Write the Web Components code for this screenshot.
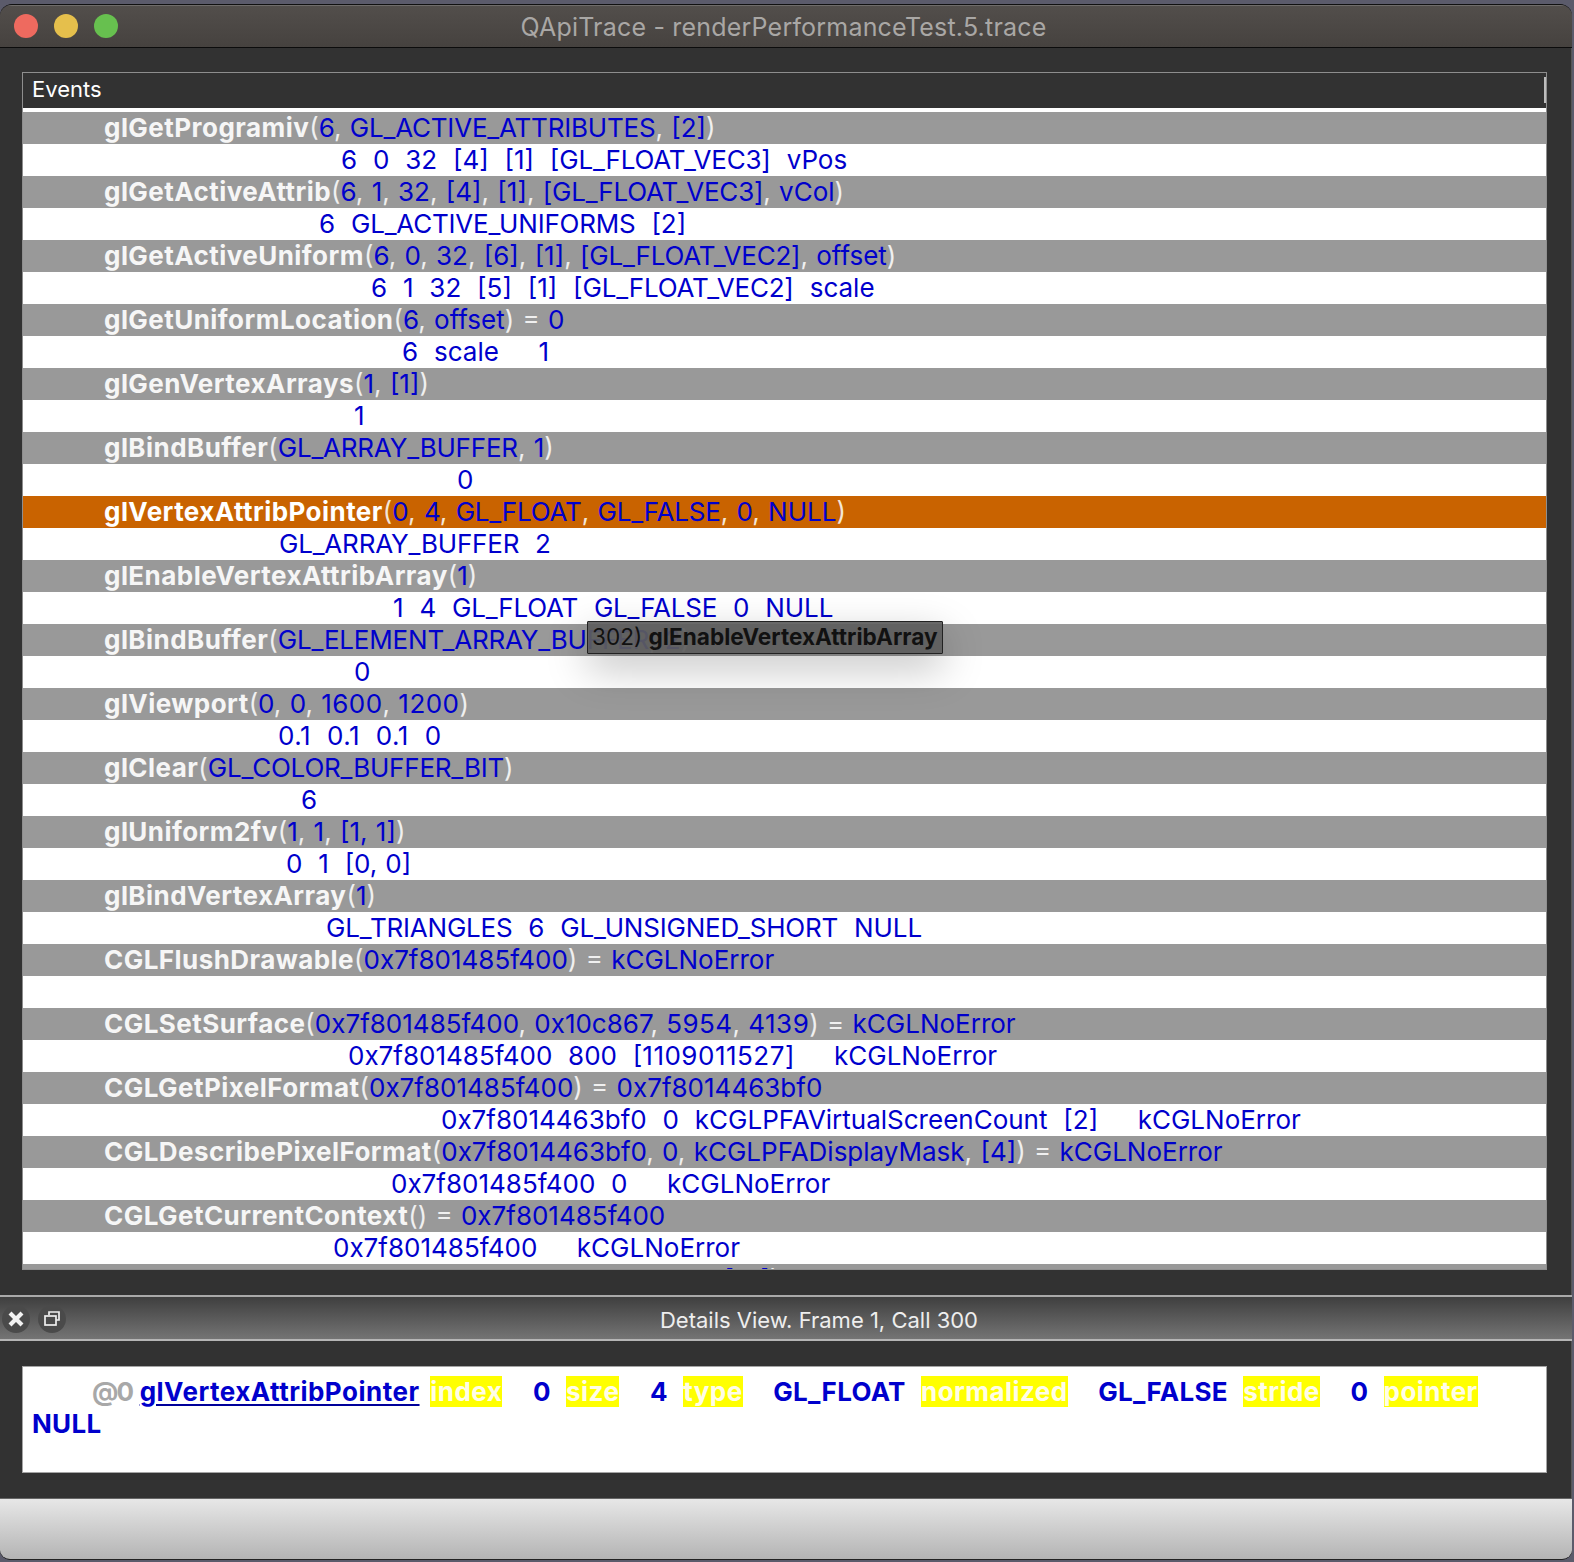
<!DOCTYPE html>
<html><head><meta charset="utf-8"><style>
html,body{margin:0;padding:0;background:#5b5b6b;width:1574px;height:1562px;overflow:hidden;font-family:Inter,"Liberation Sans",sans-serif}
</style></head><body>
<app-window>
  <title-bar slot="title">QApiTrace - renderPerformanceTest.5.trace</title-bar>
  <events-panel slot="events">
    <value-row pad="581">[2]</value-row>
    <call-row name="glGetProgramiv" args="6;GL_ACTIVE_ATTRIBUTES;[2]"></call-row>
    <value-row pad="341">6  0  32  [4]  [1]  [<gl-name>GL_FLOAT_VEC3</gl-name>]  vPos</value-row>
    <call-row name="glGetActiveAttrib" args="6;1;32;[4];[1];[GL_FLOAT_VEC3];vCol"></call-row>
    <value-row pad="319">6  <gl-name>GL_ACTIVE_UNIFORMS</gl-name>  [2]</value-row>
    <call-row name="glGetActiveUniform" args="6;0;32;[6];[1];[GL_FLOAT_VEC2];offset"></call-row>
    <value-row pad="371">6  1  32  [5]  [1]  [<gl-name>GL_FLOAT_VEC2</gl-name>]  scale</value-row>
    <call-row name="glGetUniformLocation" args="6;offset" ret="0"></call-row>
    <value-row pad="402">6  scale     1</value-row>
    <call-row name="glGenVertexArrays" args="1;[1]"></call-row>
    <value-row pad="354">1</value-row>
    <call-row name="glBindBuffer" args="GL_ARRAY_BUFFER;1"></call-row>
    <value-row pad="457">0</value-row>
    <call-row name="glVertexAttribPointer" args="0;4;GL_FLOAT;GL_FALSE;0;NULL" selected></call-row>
    <value-row pad="279"><gl-name>GL_ARRAY_BUFFER</gl-name>  2</value-row>
    <call-row name="glEnableVertexAttribArray" args="1"></call-row>
    <value-row pad="393">1  4  <gl-name>GL_FLOAT</gl-name>  <gl-name>GL_FALSE</gl-name>  0  NULL</value-row>
    <call-row name="glBindBuffer" args="GL_ELEMENT_ARRAY_BUFFER;2"></call-row>
    <value-row pad="354">0</value-row>
    <call-row name="glViewport" args="0;0;1600;1200"></call-row>
    <value-row pad="278"><wide-num>0.1</wide-num>  <wide-num>0.1</wide-num>  <wide-num>0.1</wide-num>  0</value-row>
    <call-row name="glClear" args="GL_COLOR_BUFFER_BIT"></call-row>
    <value-row pad="301">6</value-row>
    <call-row name="glUniform2fv" args="1;1;[1, 1]"></call-row>
    <value-row pad="286">0  1  [0, 0]</value-row>
    <call-row name="glBindVertexArray" args="1"></call-row>
    <value-row pad="326"><gl-name>GL_TRIANGLES</gl-name>  6  <gl-name>GL_UNSIGNED_SHORT</gl-name>  NULL</value-row>
    <call-row name="CGLFlushDrawable" args="0x7f801485f400" ret="kCGLNoError"></call-row>
    <value-row pad="0"></value-row>
    <call-row name="CGLSetSurface" args="0x7f801485f400;0x10c867;5954;4139" ret="kCGLNoError"></call-row>
    <value-row pad="348">0x7f801485f400  800  [<wide-num>1109011527</wide-num>]     kCGLNoError</value-row>
    <call-row name="CGLGetPixelFormat" args="0x7f801485f400" ret="0x7f8014463bf0"></call-row>
    <value-row pad="441">0x7f8014463bf0  0  kCGLPFAVirtualScreenCount  [2]     kCGLNoError</value-row>
    <call-row name="CGLDescribePixelFormat" args="0x7f8014463bf0;0;kCGLPFADisplayMask;[4]" ret="kCGLNoError"></call-row>
    <value-row pad="391">0x7f801485f400  0     kCGLNoError</value-row>
    <call-row name="CGLGetCurrentContext" args="" ret="0x7f801485f400"></call-row>
    <value-row pad="333">0x7f801485f400     kCGLNoError</value-row>
    <call-row name="glGetIntegerv" args="GL_MAX_TEXTURE_IMAGE_UNITS;[16]"></call-row>
    <trace-tip slot="tip"><span>302) </span><b>glEnableVertexAttribArray</b></trace-tip>
  </events-panel>
  <details-bar slot="bar">Details View. Frame 1, Call 300</details-bar>
  <details-view slot="details"></details-view>
  <status-strip slot="status"></status-strip>
</app-window>
<script>
const FONT='Inter,"Liberation Sans",sans-serif';
function def(name,html,init){customElements.define(name,class extends HTMLElement{constructor(){super();this.attachShadow({mode:'open'}).innerHTML=html;}connectedCallback(){init&&init.call(this,this.shadowRoot);}});}
def('app-window',`<style>
:host{display:block;position:relative;width:1574px;height:1562px;box-sizing:border-box;padding:4px 2px 2px 0;font-family:${FONT}}
.w{display:flex;flex-direction:column;height:100%;background:#323232;border-radius:12px 12px 10px 10px;overflow:hidden;border-top:1px solid #111;border-bottom:1px solid #222;box-sizing:border-box;box-shadow:inset -1px 0 0 #555}
.main{height:1247px;box-sizing:border-box;padding:24px 26px 0 22px}
</style><div class="w"><slot name="title"></slot><div class="main"><slot name="events"></slot></div><slot name="bar"></slot><slot name="details"></slot><slot name="status"></slot></div>`);
def('title-bar',`<style>
:host{display:flex;align-items:center;position:relative;height:43px;box-sizing:border-box;background:linear-gradient(#524e4b,#46423f);border-top:1px solid #6f6c6a;border-bottom:1px solid #0c0c0c;flex:none}
.l{position:absolute;left:14px;top:8px;display:flex;gap:16px}
.l i{width:24px;height:24px;border-radius:50%}
.t{flex:1;text-align:center;color:#a9a7a5;font-size:25px;padding-right:5px;letter-spacing:.2px}
</style><div class="l"><i style="background:#ee6a5f"></i><i style="background:#e5bf4c"></i><i style="background:#67c04f"></i></div><div class="t"><slot></slot></div>`);
def('events-panel',`<style>
:host{display:block;position:relative;height:1198px;width:1525px;box-sizing:border-box;border:1px solid #8e8e8e;background:#fff}
.h{height:35px;background:#323232;color:#fff;font-size:22px;line-height:33px;padding-left:9px;position:relative;box-sizing:border-box}
.h i{position:absolute;right:0;top:4px;width:2px;height:26px;background:#bdbdbd}
.v{height:1161px;overflow:hidden}
.s{margin-top:-28px}
</style><div class="h">Events<i></i></div><div class="v"><div class="s"><slot></slot></div></div><slot name="tip"></slot>`);
const rowCss=`:host{display:flex;height:32px;box-sizing:border-box;white-space:pre;font-size:26px;line-height:32px;overflow:hidden}`;
def('gl-name',`<style>:host{display:inline;letter-spacing:-.2px}</style><slot></slot>`);
def('wide-num',`<style>:host{display:inline;letter-spacing:.5px}</style><slot></slot>`);
def('value-row',`<style>${rowCss}:host{background:#fff;color:#0000cc;word-spacing:.6px}</style><div id="t"><slot></slot></div>`,function(r){r.getElementById('t').style.paddingLeft=(+this.getAttribute('pad')-23)+'px';});
def('call-row',`<style>${rowCss}
:host{background:#999;color:#f0f0f0;padding-left:81px;word-spacing:1px}
:host([selected]){background:#c96300;color:#f4e6d8}
b{color:#fff;font-weight:700;letter-spacing:.45px}
:host(:not([selected])) b{color:#f6f6f6}
.v{color:#0000cc}
.g{letter-spacing:-.2px}
.n{letter-spacing:.45px}
</style><div id="t"></div>`,function(r){
 const t=r.getElementById('t'),a=(this.getAttribute('args')||'').split(';').filter(Boolean),ret=this.getAttribute('ret');
 const add=(c,x)=>{const e=document.createElement(c=='b'?'b':'span');if(c=='v')e.className='v'+(/GL_/.test(x)?' g':/^\d{3,}$/.test(x)?' n':'');e.textContent=x;t.appendChild(e);};
 add('b',this.getAttribute('name'));add('',"(");a.forEach((x,i)=>{if(i)add('',", ");add('v',x);});add('',")");
 if(ret!==null){add('',' = ');add('v',ret);}
});
def('trace-tip',`<style>
:host{position:absolute;left:564px;top:548px;width:356px;height:33px;box-sizing:border-box;background:rgba(92,92,92,.93);border:1px solid #222;border-radius:1px;color:#111;font-size:22.6px;line-height:29px;padding-left:4px;white-space:pre;box-shadow:0 14px 40px rgba(0,0,0,.25)}
b{letter-spacing:-.03px}
</style><slot></slot>`);
def('details-bar',`<style>
:host{display:block;flex:none;position:relative;height:46px;box-sizing:border-box;background:linear-gradient(#3f3f3f,#747474);border-top:2px solid #a9a9a9;border-bottom:2px solid #b5b5b5;color:#eee;font-size:22px;line-height:46px;text-align:center}
.t{padding-left:66px}
.b{position:absolute;top:8px;width:28px;height:28px;border-radius:50%;background:radial-gradient(circle,#4a4a4a 70%,rgba(74,74,74,0) 100%);display:flex;align-items:center;justify-content:center}
</style><div class="b" style="left:2px"><svg width="16" height="16" viewBox="0 0 16 16"><path d="M3.5 3.5L12.5 12.5M12.5 3.5L3.5 12.5" stroke="#f2f2f2" stroke-width="4.2" stroke-linecap="square"/></svg></div>
<div class="b" style="left:38px"><svg width="18" height="18" viewBox="0 0 18 18" fill="none" stroke="#eee" stroke-width="1.7"><path d="M6 5V2h10v8h-3"/><rect x="2" y="6" width="11" height="9" fill="#4a4a4a"/></svg></div><div class="t"><slot></slot></div>`);
def('details-view',`<style>
:host{display:block;flex:none;height:157px;box-sizing:border-box;padding:25px 26px 25px 22px}
.c{height:107px;width:1525px;box-sizing:border-box;background:#fff;border:1px solid #a4a4a4;padding:9px 8px 0 9px;font-size:26px;line-height:32px;font-weight:700;color:#0000cc;white-space:pre-wrap;letter-spacing:.3px;word-spacing:1.2px}
.g{color:#a8a8a8;margin-left:60px;letter-spacing:-2px}
a{color:#0000cc;text-decoration:underline;text-decoration-thickness:1.5px;text-underline-offset:3px;text-decoration-color:#00009a;margin-right:-4.5px;letter-spacing:.5px}
.k{background:#ffff00;color:#fffde8;letter-spacing:.45px}
</style><div class="c"><span class="g">@0</span> <a>glVertexAttribPointer</a>  <span class="k">index</span>    0  <span class="k">size</span>    4  <span class="k">type</span>    GL_FLOAT  <span class="k">normalized</span>    GL_FALSE  <span class="k">stride</span>    0  <span class="k">pointer</span>
NULL</div>`);
def('status-strip',`<style>:host{display:block;flex:1;background:linear-gradient(#e7e7e7,#b4b4b4);border-top:1px solid #666}</style>`);
</script>
</body></html>
